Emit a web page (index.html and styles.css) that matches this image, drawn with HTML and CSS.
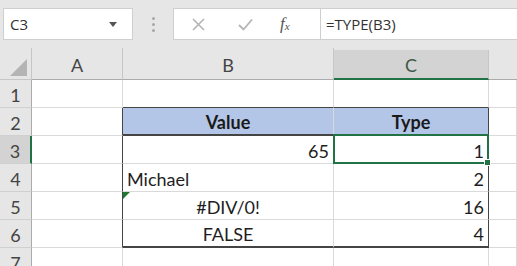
FILE: index.html
```html
<!DOCTYPE html>
<html lang="en">
<head>
    <meta charset="UTF-8">
    <title>TYPE - Sheet</title>
    <link rel="stylesheet" href="styles.css">
</head>
<body>

<!-- Formula bar -->
<div class="formula-bar">
    <div class="name-box">
        <span>C3</span>
        <span class="drop"></span>
    </div>
    <div class="dots"><i></i><i></i><i></i></div>
    <div class="controls">
        <svg class="ic" width="13" height="13" viewBox="0 0 13 13"><path d="M1 1 L12 12 M12 1 L1 12" stroke="#b4b4b4" stroke-width="1.6" fill="none"/></svg>
        <svg class="ic" width="15" height="13" viewBox="0 0 15 13"><path d="M1 7 L5.5 11.5 L14 1.5" stroke="#b4b4b4" stroke-width="1.8" fill="none"/></svg>
        <span class="fx">f<sub>x</sub></span>
    </div>
    <div class="formula">=TYPE(B3)</div>
</div>

<!-- Sheet grid -->
<div class="sheet">
    <div class="corner"><span class="tri"></span></div>
    <div class="colh">A</div>
    <div class="colh">B</div>
    <div class="colh sel">C</div>
    <div class="colh last"></div>

    <!-- row 1 -->
    <div class="rowh">1</div>
    <div class="cell"></div>
    <div class="cell dark-b"></div>
    <div class="cell dark-b"></div>
    <div class="cell"></div>

    <!-- row 2 -->
    <div class="rowh">2</div>
    <div class="cell dark-r"></div>
    <div class="cell head thick-b">Value</div>
    <div class="cell head thick-b dark-r">Type</div>
    <div class="cell"></div>

    <!-- row 3 -->
    <div class="rowh sel">3</div>
    <div class="cell dark-r"></div>
    <div class="cell right">65</div>
    <div class="cell right dark-r active">1</div>
    <div class="cell"></div>

    <!-- row 4 -->
    <div class="rowh">4</div>
    <div class="cell dark-r"></div>
    <div class="cell">Michael</div>
    <div class="cell right dark-r">2</div>
    <div class="cell"></div>

    <!-- row 5 -->
    <div class="rowh">5</div>
    <div class="cell dark-r"></div>
    <div class="cell center flag">#DIV/0!</div>
    <div class="cell right dark-r">16</div>
    <div class="cell"></div>

    <!-- row 6 -->
    <div class="rowh">6</div>
    <div class="cell dark-r"></div>
    <div class="cell center thick-b">FALSE</div>
    <div class="cell right thick-b dark-r">4</div>
    <div class="cell"></div>

    <!-- row 7 -->
    <div class="rowh">7</div>
    <div class="cell"></div>
    <div class="cell"></div>
    <div class="cell"></div>
    <div class="cell"></div>
</div>

</body>
</html>
```

FILE: styles.css
```css
body {
    margin: 0;
    padding: 0;
    background-color: #e6e6e6;
    font-family: Lato, "Open Sans", sans-serif;
    overflow: hidden;
}

/* formula bar */
.formula-bar {
    display: flex;
    align-items: center;
    height: 48px;
    padding-left: 3px;
    box-sizing: border-box;
    font-family: "Open Sans", "Noto Sans", sans-serif;
    font-size: 15px;
    color: #333;
}
.name-box, .controls, .formula {
    height: 32px;
    background-color: #fff;
    border: 1px solid #cfcfcf;
    box-sizing: border-box;
    display: flex;
    align-items: center;
}
.name-box {
    width: 130px;
    padding: 0 0 0 6px;
    justify-content: space-between;
}
.drop {
    width: 0;
    height: 0;
    border-left: 4px solid transparent;
    border-right: 4px solid transparent;
    border-top: 5px solid #555;
    margin-right: 15px;
}
.dots {
    width: 40px;
    display: flex;
    flex-direction: column;
    align-items: center;
    gap: 3px;
}
.dots i {
    width: 3px;
    height: 3px;
    background-color: #a8a8a8;
    border-radius: 50%;
}
.controls {
    width: 148px;
    padding-left: 18px;
}
.controls .ic:nth-child(2) {
    margin-left: 33px;
}
.fx {
    margin-left: 27px;
    font-family: "Liberation Serif", serif;
    font-style: italic;
    font-size: 17px;
    color: #555;
}
.fx sub {
    font-size: 11px;
    vertical-align: -1px;
}
.formula {
    flex: 1;
    margin-left: -1px;
    margin-right: -2px;
    padding-left: 5px;
}

/* sheet */
.sheet {
    display: grid;
    grid-template-columns: 32px 91px 211px 155px 1fr;
    grid-template-rows: 32px repeat(7, 28px);
    font-size: 18px;
    color: #1e1e1e;
}
.corner, .colh, .rowh {
    background-color: #e6e6e6;
    box-sizing: border-box;
    color: #444;
}
.corner {
    border-right: 1px solid #c6c6c6;
    border-bottom: 1px solid #c6c6c6;
    position: relative;
}
.tri {
    position: absolute;
    right: 4px;
    bottom: 3px;
    width: 0;
    height: 0;
    border-left: 17px solid transparent;
    border-bottom: 17px solid #b4b4b4;
}
.colh {
    border-right: 1px solid #c6c6c6;
    border-bottom: 1px solid #ababab;
    display: flex;
    align-items: center;
    justify-content: center;
    padding-top: 2px;
}
.colh.sel {
    background-color: #d3d3d3;
    border-bottom: 2px solid #217346;
    margin-top: 2px;
    color: #3d5a48;
}
.colh.last {
    border-right: none;
}
.rowh {
    border-right: 1px solid #ababab;
    border-bottom: 1px solid #d0d0d0;
    display: flex;
    align-items: center;
    justify-content: center;
    padding-top: 2px;
}
.rowh.sel {
    background-color: #d3d3d3;
    border-right: 2px solid #217346;
}
.cell {
    background-color: #fff;
    border-right: 1px solid #dadada;
    border-bottom: 1px solid #dadada;
    box-sizing: border-box;
    display: flex;
    align-items: center;
    padding: 2px 4px 0 4px;
    white-space: nowrap;
    position: relative;
}
.right {
    justify-content: flex-end;
}
.center {
    justify-content: center;
}
.head {
    background-color: #b4c6e7;
    justify-content: center;
    font-weight: bold;
    color: #1a1a1a;
}
.dark-b {
    border-bottom: 1px solid #444;
}
.thick-b {
    border-bottom: 2px solid #444;
}
.dark-r {
    border-right: 1px solid #444;
}

/* active cell */
.active::after {
    content: "";
    position: absolute;
    left: -1px;
    top: -2px;
    right: -1px;
    bottom: -1px;
    border: 2px solid #217346;
}
.active::before {
    content: "";
    position: absolute;
    right: -3px;
    bottom: -3px;
    width: 5px;
    height: 5px;
    background-color: #217346;
    border: 1px solid #fff;
    z-index: 2;
}

/* error indicator */
.flag::before {
    content: "";
    position: absolute;
    left: 0;
    top: 0;
    width: 0;
    height: 0;
    border-top: 7px solid #1e7a2e;
    border-right: 7px solid transparent;
}
```
